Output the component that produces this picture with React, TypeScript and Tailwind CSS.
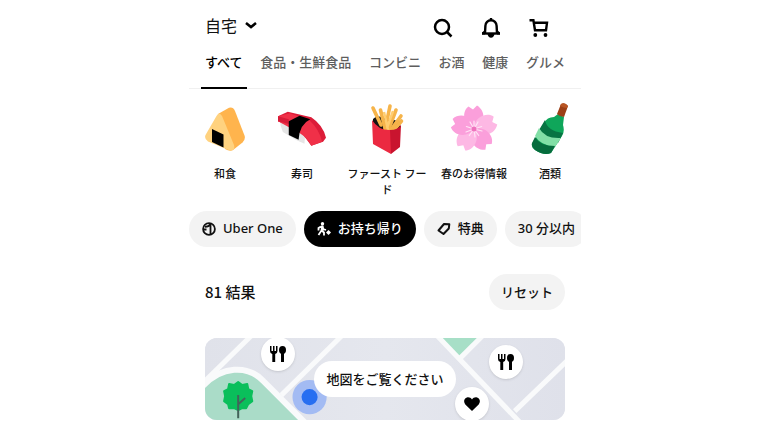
import type { ReactNode } from 'react';
import clsx from 'clsx';

const tabs = ['すべて', '食品・生鮮食品', 'コンビニ', 'お酒', '健康', 'グルメ'];

function SearchIcon() {
  return (
    <svg viewBox="0 0 20 20" className="size-5" fill="none" stroke="#000" strokeWidth="2.5">
      <circle cx="9" cy="9" r="7" />
      <path d="M14 14l4.5 4.5" />
    </svg>
  );
}

function BellIcon() {
  return (
    <svg viewBox="0 0 20 20" className="size-5" fill="none" stroke="#000" strokeWidth="2.4">
      <path d="M4 15L4.400 7.800A5.600 5.600 0 0 1 15.600 7.800L16 15" />
      <path d="M1 16.500V14.500L4 12V16.500ZM19 16.500V14.500L16 12V16.500Z" fill="#000" stroke="none" />
      <path d="M1 15.500H19" />
      <path d="M10 0V3" />
      <path d="M6.500 16H13.500C13.100 18.200 11.800 19.700 10 19.700S6.900 18.200 6.500 16Z" fill="#000" stroke="none" />
    </svg>
  );
}

function CartIcon() {
  return (
    <svg viewBox="0 0 20 20" className="size-5" fill="none" stroke="#000" strokeWidth="2.4">
      <path d="M.5 2.300H4.400L6 12.300H17L18 4.800H5" />
      <circle cx="6.300" cy="17" r="1.900" fill="#000" stroke="none" />
      <circle cx="16.500" cy="17" r="1.900" fill="#000" stroke="none" />
    </svg>
  );
}

function ChevronIcon() {
  return (
    <svg viewBox="0 0 12 8" className="h-2 w-3" fill="none" stroke="#000" strokeWidth="2.6">
      <path d="M1 2L6 6L11 2" />
    </svg>
  );
}

function OnigiriIcon() {
  return (
    <svg viewBox="0 0 40 44" className="h-11 w-10">
      <path
        d="M13 7L24 .8Q28-.5 30 4L39.700 29Q40.500 33 37.500 35.500L28 43Q25 45 20 42Z"
        fill="#ffb44d"
      />
      <path
        d="M11.500 9Q14 4.500 17 9L29 38Q30.500 44 25 43.500L3 34.500Q-1 32 .5 28Z"
        fill="#ffd27f"
      />
      <path d="M7 22L18.500 27.500V40.500L7 35Z" fill="#000" />
    </svg>
  );
}

function SushiIcon() {
  return (
    <svg viewBox="0 0 49 36" className="h-9 w-12">
      <path d="M2 9L28 20L27 33L18 29L5 21Q2 15 2 9Z" fill="#e5e5e5" />
      <path d="M0 5L10 .5L34 6Q46 14 49 27L46 31L34 35L22 19L0 10Z" fill="#dc1c38" />
      <path d="M0 5L12 2L32 9Q42 18 45 31L34 35Q30 27 22 22L0 10Z" fill="#f03048" />
      <path d="M0 5L11 8V13L0 10Z" fill="#d71b38" />
      <path d="M11 10L22 4.500L33 8Q22 13 21 29L11 24Z" fill="#000" />
    </svg>
  );
}

function FriesIcon() {
  return (
    <svg viewBox="0 0 34 52" className="h-13 w-9">
      <path d="M3 16L7 13L28 18L31 24L18 34L3 25Z" fill="#111" />
      <g stroke="#f6b44a" strokeWidth="3.600" strokeLinecap="round">
        <path d="M3 5L11 22" />
        <path d="M10.500 7L15 25" />
        <path d="M20 3L15 27" />
        <path d="M26 7L18 28" />
        <path d="M31 13L20 28" />
        <path d="M31.500 18L23 28" />
      </g>
      <path d="M14 9L18 27M23 8L17 25" stroke="#ffcd70" strokeWidth="2.500" />
      <path d="M2 17Q9 28 21 27V51L3 41Z" fill="#eb2941" />
      <path d="M20 27Q28 27 31 22L30 44L21 51Z" fill="#c9142f" />
    </svg>
  );
}

function SakuraIcon() {
  const petal = 'M24 25C12 19 12 6 18.500 1.500L23 4.500L27 .5C36 6 36 19 24 25Z';
  return (
    <svg viewBox="0 0 48 48" className="size-12">
      <path d={petal} fill="#fb9fdb" />
      <path d={petal} fill="#fdb8e4" transform="rotate(72 24 24)" />
      <path d={petal} fill="#fb9fdb" transform="rotate(144 24 24)" />
      <path d={petal} fill="#fdb8e4" transform="rotate(216 24 24)" />
      <path d={petal} fill="#fb9fdb" transform="rotate(288 24 24)" />
      <g stroke="#ffe3f5" strokeWidth="1.200" strokeLinecap="round">
        <path d="M24 24V16M24 24L20 17M24 24L28 17M24 24L31.600 21.500M24 24L32 26M24 24L28.700 30.500M24 24L25 32M24 24L19.300 30.500M24 24L16 27M24 24L16.400 21.500" />
      </g>
      <circle cx="24" cy="24" r="2.500" fill="#ee72bd" />
    </svg>
  );
}

function BottleIcon() {
  return (
    <svg viewBox="0 0 38 52" className="h-13 w-10">
      <path d="M27 11L33 14L32 22Q34 28 31 33L20 50Q13 53 4 47Q0 44 1 41L13 20Q16 14 23 14Z" fill="#0fa65a" />
      <path d="M14 17Q16 28 32 30L27 40Q13 38 8 27Z" fill="#087443" />
      <path d="M8 25Q14 36 30 35L24 44Q9 42 4 33Z" fill="#82dfa6" />
      <path d="M4 34Q9 43 24 43L20 50Q13 53 4 47Q0 44 1 40Z" fill="#066c3d" />
      <path d="M26 11L30 1Q34-1 37 3L33 14Q29 14 26 11Z" fill="#9c3f16" />
      <path d="M30 1Q34-1 37 3L36 5Q33 5 29 3Z" fill="#b95624" />
    </svg>
  );
}

function UberOneIcon() {
  return (
    <svg viewBox="0 0 14 14" className="size-3.5" fill="none" stroke="#111" strokeWidth="1.800">
      <circle cx="7" cy="7" r="5.900" />
      <path d="M1 7.500H4.500M3 4.800Q7 4.800 8.500 2V12" />
    </svg>
  );
}

function WalkIcon() {
  return (
    <svg viewBox="0 0 14 14" className="size-3.5" fill="#fff">
      <circle cx="5.500" cy="1.700" r="1.700" />
      <path
        d="M4 4.500L1.500 6V8.500M5 4L6.200 7L9 8M5 4.500L4.500 8.500L1.500 13M4.500 8.500L7 10.500V13.500"
        fill="none"
        stroke="#fff"
        strokeWidth="1.800"
      />
      <path d="M4 3.500H6.500L7 8.500L4 9Z" />
      <path d="M11.500 8L14 10.500L11.500 13L9 10.500Z" />
    </svg>
  );
}

function TagIcon() {
  return (
    <svg viewBox="0 0 14 14" className="size-3.5" fill="none" stroke="#111" strokeWidth="2">
      <path d="M7 2L12.300 2.300L11.800 6.500L6.500 12L1.500 8.500Z" strokeLinejoin="round" />
    </svg>
  );
}

function UtensilsIcon() {
  return (
    <svg viewBox="0 0 16 16" className="size-4" fill="#000">
      <path d="M0 0H1.500V5H3V0H4.500V5H6V0H7.500V5Q7.500 7.500 5.200 8V16H2.300V8Q0 7.500 0 5Z" />
      <ellipse cx="12.500" cy="4" rx="3.500" ry="4" />
      <path d="M11 6H14V16H11Z" />
    </svg>
  );
}

function HeartIcon() {
  return (
    <svg viewBox="0 0 16 14" className="h-3.5 w-4" fill="#000">
      <path d="M8 14L1.300 7.500C-.8 5 0 1.300 3 .5C5 0 7 1 8 2.500C9 1 11 0 13 .5C16 1.300 16.800 5 14.700 7.500Z" />
    </svg>
  );
}

const categories: { label: string; icon: ReactNode; width: string }[] = [
  { label: '和食', icon: <OnigiriIcon />, width: 'w-[72px]' },
  { label: '寿司', icon: <SushiIcon />, width: 'w-[74px]' },
  { label: 'ファースト フード', icon: <FriesIcon />, width: 'w-[88px]' },
  { label: '春のお得情報', icon: <SakuraIcon />, width: 'w-[78px]' },
  { label: '酒類', icon: <BottleIcon />, width: 'w-[66px]' },
];

const filters: { label: string; icon?: ReactNode; active?: boolean }[] = [
  { label: 'Uber One', icon: <UberOneIcon /> },
  { label: 'お持ち帰り', icon: <WalkIcon />, active: true },
  { label: '特典', icon: <TagIcon /> },
  { label: '30 分以内' },
];

function Header() {
  return (
    <header className="flex items-center justify-between px-4 pt-[13px]">
      <button className="flex items-center gap-2 pb-0.5 text-base leading-6">
        自宅
        <ChevronIcon />
      </button>
      <div className="flex gap-7 pt-1 pr-4">
        <button aria-label="検索">
          <SearchIcon />
        </button>
        <button aria-label="お知らせ">
          <BellIcon />
        </button>
        <button aria-label="カート">
          <CartIcon />
        </button>
      </div>
    </header>
  );
}

function Tabs() {
  return (
    <nav className="flex justify-between border-b border-[#f0f0f0] px-3 pt-[13px]">
      {tabs.map((tab, i) => (
        <a
          key={tab}
          href="#"
          className={clsx(
            '-mb-px border-b-2 px-1 pb-[15px] text-[13px] leading-5 font-medium whitespace-nowrap',
            i === 0 ? 'border-black text-black' : 'border-transparent text-[#5e5e5e]'
          )}
        >
          {tab}
        </a>
      ))}
    </nav>
  );
}

function Categories() {
  return (
    <div className="flex gap-1 overflow-hidden pt-3">
      {categories.map((c) => (
        <a key={c.label} href="#" className={clsx('flex shrink-0 flex-col items-center', c.width)}>
          <span className="flex h-14 items-center">{c.icon}</span>
          <span className="mt-2 w-full text-center text-[11px] leading-4 font-medium break-all">
            {c.label}
          </span>
        </a>
      ))}
    </div>
  );
}

function Filters() {
  return (
    <div className="flex gap-2 overflow-hidden pt-3.5">
      {filters.map((f) => (
        <button
          key={f.label}
          className={clsx(
            "flex h-9 shrink-0 items-center gap-[7px] rounded-full px-[13px] font-['Noto_Sans','Noto_Sans_CJK_JP',sans-serif] text-[13px] font-medium whitespace-nowrap",
            f.active ? 'bg-black text-white' : 'bg-[#f3f3f3]'
          )}
        >
          {f.icon}
          {f.label}
        </button>
      ))}
    </div>
  );
}

function MapMarker({ className, children }: { className: string; children: ReactNode }) {
  return (
    <span
      className={clsx('absolute flex size-[34px] items-center justify-center rounded-full bg-white shadow-sm', className)}
    >
      {children}
    </span>
  );
}

function MapCard() {
  return (
    <div className="relative mx-4 mt-7 h-[82px] overflow-hidden rounded-xl bg-[#e3e5ed]">
      <svg viewBox="0 0 358 82" className="size-full" preserveAspectRatio="xMidYMid slice">
        <defs>
          <linearGradient id="ground" x1="0" x2="1">
            <stop offset="0" stopColor="#e0e2ea" />
            <stop offset="0.500" stopColor="#e5e7ee" />
            <stop offset="1" stopColor="#dfe1ea" />
          </linearGradient>
        </defs>
        <path d="M0 0H358V82H0Z" fill="url(#ground)" />
        <path d="M235 0H272L253 20Z" fill="#a7dfc7" />
        <g fill="none" stroke="#f9fafb" strokeWidth="5">
          <path d="M47-3L-3 46" />
          <path d="M137-3L76 57" />
          <path d="M229-4L314 85" />
          <path d="M277-3L253 21" />
          <path d="M361 22L308 73" />
        </g>
        <path
          d="M-4 50C16 27 43 27 58 43L100 85H-4Z"
          fill="#aadcc8"
          stroke="#f9fafb"
          strokeWidth="6"
        />
        <path
          d="M33 44L37 47L42 46L43 51L47 53L46 58L47 63L43 66L41 70L37 70L33 72L29 70L24 70L23 66L19 63L20 58L19 53L23 51L24 46L29 47Z"
          fill="#0abf5b"
          stroke="#0abf5b"
          strokeWidth="2"
          strokeLinejoin="round"
        />
        <path d="M33 57V80M33 66L40 60" fill="none" stroke="#42645a" strokeWidth="2" />
        <circle cx="104" cy="59" r="17" fill="#a3bbf3" />
        <circle cx="104" cy="59" r="8" fill="#276ef1" />
      </svg>
      <MapMarker className="-top-px left-14">
        <UtensilsIcon />
      </MapMarker>
      <MapMarker className="top-[7px] right-[42px]">
        <UtensilsIcon />
      </MapMarker>
      <MapMarker className="top-[49px] right-[76px]">
        <HeartIcon />
      </MapMarker>
      <button className="absolute inset-x-0 top-[23px] mx-auto h-9 w-fit rounded-full bg-white px-3 text-[13px] font-medium whitespace-nowrap">
        地図をご覧ください
      </button>
    </div>
  );
}

function App() {
  return (
    <main className="bg-white font-['Noto_Sans_CJK_JP',sans-serif] text-[#111]">
      <div className="mx-auto max-w-[392px] overflow-hidden">
        <Header />
        <Tabs />
        <Categories />
        <Filters />
        <div className="flex items-center justify-between px-4 pt-[27px]">
          <h2 className="text-[15px] leading-5 font-medium">81 結果</h2>
          <button className="h-9 rounded-full bg-[#f3f3f3] px-3 text-[13px] font-medium">リセット</button>
        </div>
        <MapCard />
      </div>
    </main>
  );
}

export default App;
